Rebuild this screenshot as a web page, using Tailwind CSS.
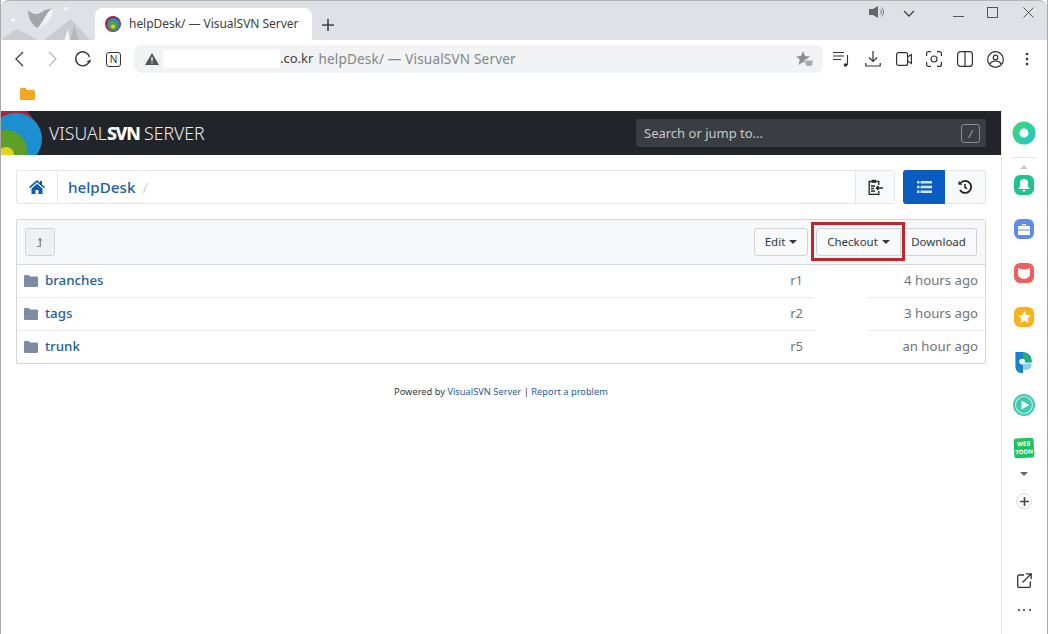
<!DOCTYPE html>
<html lang="en">
  <head>
    <meta charset="UTF-8" />
    <title>helpDesk/ — VisualSVN Server</title>
    <script src="https://cdn.jsdelivr.net/npm/@tailwindcss/browser@4"></script>
  </head>
  <body class="bg-white font-['Noto_Sans','Open_Sans',sans-serif] text-[#212529]">
    <div class="relative w-[1048px] h-[634px] overflow-hidden bg-white border-l border-r border-[#a9a9a9]">
      <!-- Title bar -->
      <div class="relative h-10 flex bg-[#dee1e6] border-t border-[#b4b4b4] rounded-t-lg overflow-hidden">
        <svg class="absolute left-0 top-0" width="95" height="40" viewBox="0 0 95 40">
          <path d="M0 40 L4 36 L16 28 L24 32 L38 40 Z M42 40 L58 27 L70 18 L88 38 L94 40 Z" fill="#c9ccd1" />
          <path d="M63 40 L67 28 L69 40 Z" fill="#f4f5f6" />
          <path d="M69 40 L73 24 L78 40 Z" fill="#b4b7bc" />
          <path d="M27 9 C31 14 37 14 41 11 C45 8 49 8 52 7 C47 10 45 15 42 19 C40 22 38 25 37 27 C31 24 27 18 27 9 Z" fill="#a3a6ab" />
          <path d="M37 27 C40 25 42 22 43 19 C45 15 47 10 52 7 C52 16 46 25 37 27 Z" fill="#f2f3f4" />
          <circle cx="12" cy="19" r="2" fill="#f4f5f6" />
          <circle cx="65" cy="8" r="2" fill="#f4f5f6" />
        </svg>
        <div class="relative ml-[94px] mt-[7px] w-[217px] h-[32px] bg-white rounded-t-lg flex items-center pl-[10px]">
          <svg width="16" height="16" viewBox="0 0 16 16" class="shrink-0">
            <circle cx="8" cy="8" r="8" fill="#a8233f" />
            <circle cx="8.500" cy="8.500" r="6.500" fill="#1b8fd0" />
            <circle cx="8" cy="9.500" r="4.500" fill="#5d9f27" />
            <circle cx="8" cy="10.500" r="2" fill="#e8d220" />
          </svg>
          <span class="ml-[8px] text-[12px] tracking-[-0.04px] text-[#3c4043] whitespace-nowrap">helpDesk/ — VisualSVN Server</span>
        </div>
        <svg class="ml-[9px] mt-[17px]" width="14" height="14" viewBox="0 0 14 14" fill="none" stroke="#444" stroke-width="1.600">
          <path d="M7 1v12M1 7h12" />
        </svg>
        <div class="ml-auto flex items-start">
          <svg class="mt-[4px]" width="16" height="14" viewBox="0 0 16 14">
            <path d="M0 4h4l5-3v12l-5-3H0z" fill="#666" />
            <path d="M11 4.500a3 3 0 0 1 0 5M12.500 2.500a6 6 0 0 1 0 9" fill="none" stroke="#777" />
          </svg>
          <svg class="ml-[18px] mt-[9px]" width="12" height="7" viewBox="0 0 12 7" fill="none" stroke="#444" stroke-width="1.300">
            <path d="M1 1l5 5 5-5" />
          </svg>
          <div class="ml-[38px] mt-[15px] w-[11px] h-px bg-[#555]"></div>
          <div class="ml-[23px] mt-[6px] w-[11px] h-[11px] border border-[#555]"></div>
          <svg class="ml-[25px] mt-[6px] mr-[13px]" width="11" height="11" viewBox="0 0 11 11" stroke="#555">
            <path d="M.5.5l10 10M10.500.5l-10 10" />
          </svg>
        </div>
      </div>
      <!-- Toolbar -->
      <div class="h-[40px] flex items-center bg-white rounded-t-lg -mt-px pl-[12px]">
        <svg width="14" height="16" viewBox="0 0 14 16" fill="none" stroke="#444" stroke-width="1.400"><path d="M10 1L3 8l7 7" /></svg>
        <svg class="ml-[18px]" width="14" height="16" viewBox="0 0 14 16" fill="none" stroke="#bbb" stroke-width="1.400"><path d="M4 1l7 7-7 7" /></svg>
        <svg class="ml-[15px]" width="18" height="18" viewBox="0 0 18 18" fill="none" stroke="#333" stroke-width="1.400"><path d="M15 12a7 7 0 1 1 .5-5" /><path d="M12.500 11.500l3.500 1.500 1-3.500" fill="#333" stroke="none" /></svg>
        <div class="ml-[14px] w-[15px] h-[15px] border border-[#333] rounded-[3px] text-[10px] leading-[13px] text-center text-[#333]">N</div>
        <!-- Address bar -->
        <div class="ml-[13px] w-[689px] h-[28px] bg-[#f1f3f4] rounded-lg flex items-center pl-[11px] pr-[9px]">
          <svg width="14" height="12" viewBox="0 0 14 12"><path d="M7 0l7 12H0z" fill="#555" /><path d="M6.400 4h1.200v4H6.400zM6.400 9h1.200v1.200H6.400z" fill="#fff" /></svg>
          <div class="ml-[4px] w-[117px] h-[18px] bg-white"></div>
          <span class="text-[13px] text-[#3c4043]">.co.kr</span>
          <span class="ml-[5px] text-[13.500px] tracking-[0.2px] text-[#80868b] whitespace-nowrap">helpDesk/ — VisualSVN Server</span>
          <svg class="ml-auto" width="18" height="16" viewBox="0 0 18 16">
            <path d="M7 0l2 5 5 .4-3.800 3.200L11.400 14 7 11l-4.400 3 1.200-5.400L0 5.400 5 5z" fill="#8f8f8f" />
            <path d="M9 9h8v3a3.500 3.500 0 0 1-4 3.500A3.500 3.500 0 0 1 9 12z" fill="#a8a8a8" stroke="#f1f3f4" />
          </svg>
        </div>
        <svg class="ml-[10px]" width="16" height="16" viewBox="0 0 16 16" fill="none" stroke="#333" stroke-width="1.100">
          <path d="M0 1.500h11M0 5h11M0 8.500h8M14.500 4v10" /><circle cx="12.500" cy="14" r="1.800" fill="#333" stroke="none" />
        </svg>
        <svg class="ml-[16px]" width="16" height="16" viewBox="0 0 16 16" fill="none" stroke="#333" stroke-width="1.200">
          <path d="M8 0v10M4 6.500L8 10.500l4-4M.8 12v3h14.400v-3" />
        </svg>
        <svg class="ml-[15px]" width="16" height="14" viewBox="0 0 16 14" fill="none" stroke="#333" stroke-width="1.200">
          <rect x=".6" y=".6" width="11" height="12.800" rx="2" /><path d="M11.600 5l3.800-2.500v9L11.600 9" />
        </svg>
        <svg class="ml-[14px]" width="16" height="16" viewBox="0 0 16 16" fill="none" stroke="#333" stroke-width="1.200">
          <path d="M5 .6H2.600a2 2 0 0 0-2 2V5M11 .6h2.400a2 2 0 0 1 2 2V5M5 15.400H2.600a2 2 0 0 1-2-2V11M11 15.400h2.400a2 2 0 0 0 2-2V11" /><circle cx="8" cy="8" r="3" />
        </svg>
        <svg class="ml-[15px]" width="16" height="16" viewBox="0 0 16 16" fill="none" stroke="#333" stroke-width="1.200">
          <rect x=".6" y=".6" width="14.800" height="14.800" rx="3" /><path d="M8 .6v14.800" />
        </svg>
        <svg class="ml-[14px]" width="17" height="17" viewBox="0 0 17 17" fill="none" stroke="#333" stroke-width="1.200">
          <circle cx="8.500" cy="8.500" r="7.800" /><circle cx="8.500" cy="6.500" r="2.300" /><path d="M2.800 13c1.500-2.500 3.500-3 5.700-3s4.200.5 5.700 3" />
        </svg>
        <svg class="ml-[21px]" width="4" height="14" viewBox="0 0 4 14" fill="#333">
          <circle cx="2" cy="2" r="1.300" /><circle cx="2" cy="7" r="1.300" /><circle cx="2" cy="12" r="1.300" />
        </svg>
      </div>
      <!-- Bookmarks -->
      <div class="h-[32px] flex items-center pl-[19px] pb-[2px]">
        <svg width="15" height="12" viewBox="0 0 15 12"><path d="M0 1.500A1.500 1.500 0 0 1 1.500 0h4L7 2h6.500A1.500 1.500 0 0 1 15 3.500V10.500A1.500 1.500 0 0 1 13.500 12h-12A1.500 1.500 0 0 1 0 10.500z" fill="#f5a623" /></svg>
      </div>

      <div class="flex h-[523px]">
        <div class="w-[1000px] shrink-0">
          <!-- Navbar -->
          <div class="relative h-[44px] bg-[#212529] overflow-hidden flex items-center pr-[15px]">
            <svg class="absolute left-0 top-0" width="42" height="44" viewBox="0 0 42 44">
              <circle cx="8" cy="22" r="28" fill="#a8233f" />
              <circle cx="15" cy="28" r="26" fill="#1b8fd0" />
              <circle cx="5" cy="40" r="21" fill="#5d9f27" />
              <circle cx="5" cy="44" r="8" fill="#e8d220" />
            </svg>
            <div class="ml-[48px] text-[17.700px] font-light text-[#e9ecef] whitespace-nowrap">VISUAL<span class="font-extrabold text-white tracking-[-1.300px]">SVN</span> SERVER</div>
            <div class="ml-auto w-[350px] h-[28px] bg-[#3a3e42] rounded-[3px] flex items-center justify-between pl-[8px] pr-[6px]">
              <span class="pt-px text-[13px] text-[#c6cacd]">Search or jump to...</span>
              <span class="w-[19px] h-[19px] border border-[#868b90] rounded-[3px] text-[11px] leading-[17px] text-center text-[#a4a8ac] italic">/</span>
            </div>
          </div>
          <div class="pl-[15px] pr-[15px]">
            <!-- Breadcrumb -->
            <div class="mt-[15px] flex gap-[8px] h-[34px]">
              <div class="flex-1 flex items-stretch border border-[#e3e5e8] rounded-[3px]">
                <div class="w-[41px] flex items-center justify-center border-r border-[#e3e5e8]">
                  <svg width="16" height="14" viewBox="0 0 16 14" fill="#0b5cad">
                    <path d="M8 0L0 7l1 1.200L8 2.200l7 6L16 7l-3-2.600V1h-2v1.700zM2.500 8.500V14h4v-4h3v4h4V8.500L8 3.800z" />
                  </svg>
                </div>
                <div class="flex items-center pl-[10px] pt-px text-[15.200px] font-medium text-[#22609f]">helpDesk<span class="ml-[7px] font-normal text-[#ced4da]">/</span></div>
                <div class="ml-auto w-[39px] flex items-center justify-center bg-[#f8f9fa] border-l border-[#e3e5e8]">
                  <svg width="15" height="16" viewBox="0 0 15 16" fill="none" stroke="#212529" stroke-width="1.300">
                    <path d="M4 2.500H1.200v12.800h9.600V12M8.500 2.500h2.300V6" /><rect x="3.800" y=".8" width="4.400" height="3" fill="#212529" stroke="none" /><path d="M3 7h4M3 9.500h3M3 12h4" /><path d="M15 9H8.500M10.500 7l-2 2 2 2" stroke-width="1.500" />
                  </svg>
                </div>
              </div>
              <div class="flex w-[83px]">
                <div class="w-[42px] bg-[#0b5cc0] rounded-l-[3px] flex items-center justify-center">
                  <svg width="15" height="12" viewBox="0 0 15 12" fill="#cfe6f7"><path d="M0 0h2.500v2.500H0zM3.500 0H15v2.500H3.500zM0 4.700h2.500v2.500H0zM3.500 4.700H15v2.500H3.500zM0 9.400h2.500V12H0zM3.500 9.400H15V12H3.500z" /></svg>
                </div>
                <div class="flex-1 bg-[#f8f9fa] border border-l-0 border-[#e3e5e8] rounded-r-[3px] flex items-center justify-center">
                  <svg width="14" height="14" viewBox="0 0 14 14" fill="none" stroke="#212529" stroke-width="1.800">
                    <path d="M2.600 3A6 6 0 1 1 2 10" /><path d="M.5 .8v4h4z" fill="#212529" stroke="none" /><path d="M7 4v3.500l2 1.200" stroke-width="1.500" />
                  </svg>
                </div>
              </div>
            </div>
            <!-- File list -->
            <div class="mt-[15px] border border-[#d3d6da] rounded-[2px]">
              <div class="h-[45px] flex items-center bg-[#f6f8fa] border-b border-[#d3d6da] pl-[8px] pr-[8px]">
                <div class="w-[30px] h-[28px] bg-[#eef0f3] border border-[#ced4da] rounded-[3px] flex items-center justify-center">
                  <svg width="8" height="11" viewBox="0 0 8 10" fill="#868e96"><path d="M4 0l2.500 3H5v6.500H.8V8.500H3.500V3H1.500z" /></svg>
                </div>
                <div class="ml-auto h-[28px] w-[54px] border border-[#ced4da] rounded-[3px] bg-[#f8f9fa] flex items-center justify-center text-[11.500px] text-[#343a40]">Edit<span class="ml-[4px] border-x-[4px] border-x-transparent border-t-[4px] border-t-[#343a40]"></span></div>
                <div class="ml-[8px] h-[28px] w-[85px] border border-[#ced4da] rounded-l-[3px] bg-[#f8f9fa] flex items-center justify-center text-[11.500px] text-[#343a40]">Checkout<span class="ml-[4px] border-x-[4px] border-x-transparent border-t-[4px] border-t-[#343a40]"></span></div>
                <div class="h-[28px] w-[76px] border border-l-0 border-[#ced4da] rounded-r-[3px] bg-[#f8f9fa] flex items-center justify-center text-[11.500px] text-[#343a40]">Download</div>
              </div>
              <div class="h-[33px] flex items-center text-[13.300px]">
                <div class="flex-1 h-full flex items-center pl-[7px] border-b border-[#e9ecef]">
                  <svg width="14" height="12" viewBox="0 0 14 12" fill="#7d8ca3"><path d="M0 1.200A1.200 1.200 0 0 1 1.200 0h3.600l1.200 1.500h6.800A1.200 1.200 0 0 1 14 2.700v8.100a1.200 1.200 0 0 1-1.200 1.200H1.200A1.200 1.200 0 0 1 0 10.800z" /></svg>
                  <a class="ml-[7px] font-medium text-[#22609f]">branches</a>
                </div>
                <div class="w-[40px] h-full flex items-center justify-end pr-[11px] text-[13px] text-[#6c757d] border-b border-[#e9ecef]">r1</div>
                <div class="w-[54px]"></div>
                <div class="w-[117px] h-full flex items-center justify-end pr-[7px] text-[13.200px] text-[#6c757d] whitespace-nowrap border-b border-[#e9ecef]">4 hours ago</div>
              </div>
              <div class="h-[33px] flex items-center text-[13.300px]">
                <div class="flex-1 h-full flex items-center pl-[7px] border-b border-[#e9ecef]">
                  <svg width="14" height="12" viewBox="0 0 14 12" fill="#7d8ca3"><path d="M0 1.200A1.200 1.200 0 0 1 1.200 0h3.600l1.200 1.500h6.800A1.200 1.200 0 0 1 14 2.700v8.100a1.200 1.200 0 0 1-1.200 1.200H1.200A1.200 1.200 0 0 1 0 10.800z" /></svg>
                  <a class="ml-[7px] font-medium text-[#22609f]">tags</a>
                </div>
                <div class="w-[40px] h-full flex items-center justify-end pr-[11px] text-[13px] text-[#6c757d] border-b border-[#e9ecef]">r2</div>
                <div class="w-[54px]"></div>
                <div class="w-[117px] h-full flex items-center justify-end pr-[7px] text-[13.200px] text-[#6c757d] whitespace-nowrap border-b border-[#e9ecef]">3 hours ago</div>
              </div>
              <div class="h-[32px] flex items-center text-[13.300px]">
                <div class="flex-1 h-full flex items-center pl-[7px]">
                  <svg width="14" height="12" viewBox="0 0 14 12" fill="#7d8ca3"><path d="M0 1.200A1.200 1.200 0 0 1 1.200 0h3.600l1.200 1.500h6.800A1.200 1.200 0 0 1 14 2.700v8.100a1.200 1.200 0 0 1-1.200 1.200H1.200A1.200 1.200 0 0 1 0 10.800z" /></svg>
                  <a class="ml-[7px] font-medium text-[#22609f]">trunk</a>
                </div>
                <div class="w-[40px] h-full flex items-center justify-end pr-[11px] text-[13px] text-[#6c757d]">r5</div>
                <div class="w-[54px]"></div>
                <div class="w-[117px] h-full flex items-center justify-end pr-[7px] text-[13.200px] text-[#6c757d] whitespace-nowrap">an hour ago</div>
              </div>
            </div>
            <!-- Footer -->
            <div class="mt-[21px] text-center text-[9.300px] text-[#343a40]">Powered by <a class="text-[#22609f]">VisualSVN Server</a> | <a class="text-[#22609f]">Report a problem</a></div>
          </div>
        </div>
        <!-- Side panel -->
        <div class="flex-1 border-l border-[#e3e5e8] flex flex-col items-center pr-px">
          <svg class="mt-[10px]" width="24" height="24" viewBox="0 0 24 24">
            <defs><linearGradient id="g1" x1="0" y1="0" x2="1" y2="1"><stop offset="0" stop-color="#3fd67e" /><stop offset="1" stop-color="#1fc8c0" /></linearGradient></defs>
            <circle cx="12" cy="12" r="8" fill="none" stroke="url(#g1)" stroke-width="7" />
          </svg>
          <div class="mt-[12px] w-[24px] h-px bg-[#e3e5e8]"></div>
          <div class="mt-[7px] border-x-[4px] border-x-transparent border-b-[4px] border-b-[#c8c8c8]"></div>
          <div class="mt-[6px] w-[20px] h-[20px] rounded-[6px] bg-[#20c48a] flex items-center justify-center">
            <svg width="12" height="13" viewBox="0 0 12 13" fill="#fff"><path d="M6 0a4 4 0 0 1 4 4v4l2 2H0l2-2V4a4 4 0 0 1 4-4zM4.500 11h3a1.500 1.500 0 0 1-3 0z" /></svg>
          </div>
          <div class="mt-[24px] w-[20px] h-[20px] rounded-[6px] bg-[#5b8def] flex items-center justify-center">
            <svg width="12" height="11" viewBox="0 0 12 11" fill="#fff"><path d="M4 0h4v2h4v3.500H0V2h4zM5 1v1h2V1zM0 6.500h12V11H0z" /></svg>
          </div>
          <div class="mt-[24px] w-[20px] h-[20px] rounded-[6px] bg-[#ee5f5f] flex items-center justify-center">
            <svg width="12" height="11" viewBox="0 0 12 11" fill="#fff"><path d="M0 0c2 1 4 1.500 6 1.500S10 1 12 0v6a6 5 0 0 1-12 0z" /></svg>
          </div>
          <div class="mt-[24px] w-[20px] h-[20px] rounded-[6px] bg-[#f8b31c] flex items-center justify-center">
            <svg width="13" height="12" viewBox="0 0 13 12" fill="#fff"><path d="M6.500 0l2 4 4.500.6-3.300 3 .8 4.400-4-2.200-4 2.200.8-4.400L0 4.600 4.500 4z" /></svg>
          </div>
          <svg class="mt-[25px] shrink-0" width="20" height="21" viewBox="0 0 20 22">
            <path d="M1 0h8a9 9 0 0 1 9 9v2H9v11H7a6 6 0 0 1-6-6z" fill="#1583c9" />
            <path d="M9 1a9 9 0 0 1 9 9H9z" fill="#21b573" />
            <circle cx="8" cy="10" r="3" fill="#fff" />
            <path d="M9 12h9a6 6 0 0 1-9 6z" fill="#8bd0ee" />
          </svg>
          <svg class="mt-[21px] shrink-0" width="22" height="22" viewBox="0 0 22 22">
            <circle cx="11" cy="11" r="11" fill="#3fcab0" /><circle cx="11" cy="11" r="8.500" fill="none" stroke="#b6ecdf" stroke-width="1.200" /><path d="M8.500 6.500L16 11l-7.500 4.500z" fill="#fff" />
          </svg>
          <div class="mt-[22px] w-[20px] h-[20px] -rotate-3 bg-[#1fc262] rounded-[3px] text-[6px] leading-[8px] font-bold text-white text-center pt-[2px]">WEB<br />TOON</div>
          <div class="mt-[14px] border-x-[4px] border-x-transparent border-t-[4px] border-t-[#666]"></div>
          <div class="mt-[17px] w-[16px] h-[16px] rounded-full border border-[#ddd] flex items-center justify-center">
            <svg width="9" height="9" viewBox="0 0 9 9" stroke="#444" stroke-width="1.600"><path d="M4.500 0v9M0 4.500h9" /></svg>
          </div>
          <svg class="mt-[64px] shrink-0" width="15" height="15" viewBox="0 0 15 15" fill="none" stroke="#333" stroke-width="1.300">
            <path d="M7 2H2a1.300 1.300 0 0 0-1.300 1.300v10A1.300 1.300 0 0 0 2 14.500h10a1.300 1.300 0 0 0 1.300-1.300V8.500M5.500 9.500L14 1M9 .8h5.200V6" />
          </svg>
          <div class="mt-[21px] flex gap-[3.500px]">
            <span class="w-[2px] h-[2px] rounded-full bg-[#333]"></span><span class="w-[2px] h-[2px] rounded-full bg-[#333]"></span><span class="w-[2px] h-[2px] rounded-full bg-[#333]"></span>
          </div>
        </div>
      </div>
      <!-- Red annotation box over the Checkout button -->
      <div class="absolute left-[810px] top-[222px] w-[94px] h-[39px] border-[3px] border-[#c0272d]"></div>
    </div>
  </body>
</html>
